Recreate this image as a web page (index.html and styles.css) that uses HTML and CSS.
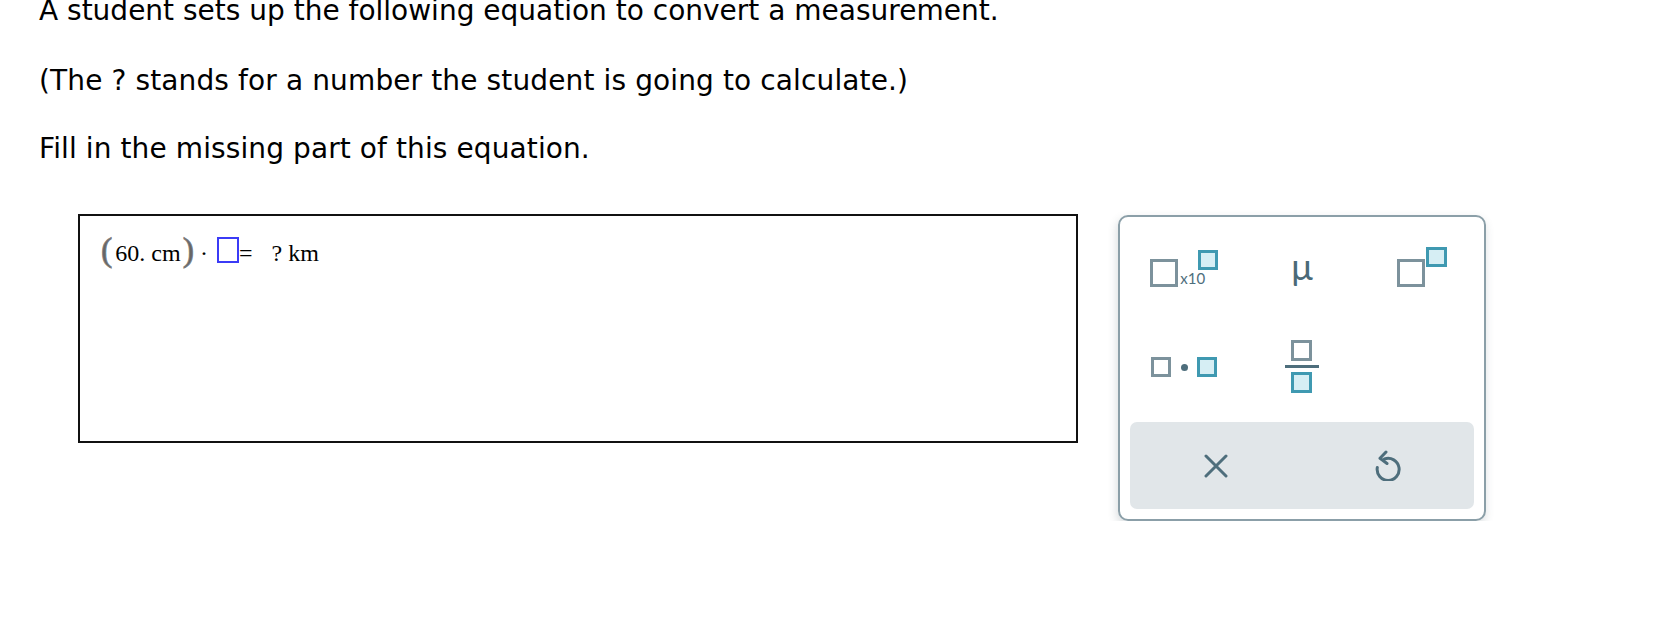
FILE: index.html
```html
<!DOCTYPE html>
<html>
<head>
<meta charset="utf-8">
<link rel="stylesheet" href="styles.css">
</head>
<body>
<div class="page">
  <p class="q q1">A student sets up the following equation to convert a measurement.</p>
  <p class="q q2">(The ? stands for a number the student is going to calculate.)</p>
  <p class="q q3">Fill in the missing part of this equation.</p>
  <div class="work">
    <div class="eqbox">
      <div class="eq"><span class="paren lp">(</span><span class="num">60.</span> <span class="unit">cm</span><span class="paren rp">)</span><span class="cdot">·</span><span class="slot"></span><span class="eqs">=</span><span class="qm">?</span> <span class="unit">km</span></div>
    </div>
    <div class="panel">
      <div class="grid">
        <div class="cell">
          <div class="ic-sci">
            <span class="bx gray big"></span>
            <span class="sci-col"><span class="bx teal sup"></span><span class="x10">x10</span></span>
          </div>
        </div>
        <div class="cell"><span class="mu">μ</span></div>
        <div class="cell">
          <div class="ic-pow">
            <span class="bx gray big"></span>
            <span class="bx teal sup2"></span>
          </div>
        </div>
        <div class="cell">
          <div class="ic-mul">
            <span class="bx gray sm"></span>
            <span class="bullet"></span>
            <span class="bx teal sm"></span>
          </div>
        </div>
        <div class="cell">
          <div class="ic-frac">
            <span class="bx gray fr"></span>
            <span class="fline"></span>
            <span class="bx teal fr"></span>
          </div>
        </div>
        <div class="cell"></div>
      </div>
      <div class="bar">
        <div class="btn">
          <svg width="24" height="24" viewBox="0 0 24 24"><path d="M2 2 L22 22 M22 2 L2 22" stroke="#4e6e7c" stroke-width="3" stroke-linecap="round" fill="none"/></svg>
        </div>
        <div class="btn">
          <svg width="26" height="31" viewBox="0 0 26 31"><path d="M2.3 17.5 A11 11 0 1 0 9.5 9" stroke="#4e6e7c" stroke-width="3" stroke-linecap="round" fill="none"/><path d="M11 2 L5 8.3 L12 13.5" stroke="#4e6e7c" stroke-width="3" stroke-linecap="round" stroke-linejoin="round" fill="none"/></svg>
        </div>
      </div>
    </div>
  </div>
</div>
</body>
</html>
```
FILE: styles.css
```css
html, body { margin: 0; padding: 0; background: #fff; }
body { font-family: "DejaVu Sans", Verdana, sans-serif; color: #000; }
.page { padding-left: 39px; margin-top: -5px; }
.q { margin: 0; font-size: 28px; line-height: 32px; }
.q1 { margin-bottom: 38px; }
.q2 { margin-bottom: 36px; letter-spacing: 0.12px; }
.q3 { margin-bottom: 49px; letter-spacing: 0.1px; }
.work { display: flex; align-items: flex-start; margin-left: 39px; }
.eqbox { box-sizing: border-box; width: 1000px; height: 229px; border: 2px solid #111; }
.eq { font-family: "Liberation Serif", "Times New Roman", serif; font-size: 24px; line-height: 40px; padding: 14px 0 0 21px; white-space: nowrap; }
.paren { font-size: 34px; color: #666; -webkit-text-stroke: 0.8px #7a7a7a; }
.lp { margin-right: 3px; }
.rp { margin-left: 2px; }
.cdot { margin: 0 9px 0 6px; }
.slot { display: inline-block; box-sizing: border-box; width: 22px; height: 26px; border: 2px solid #3b3bf6; vertical-align: -2px; }
.eqs { margin-right: 19px; }
.panel { box-sizing: border-box; width: 368px; height: 306px; margin-left: 40px; margin-top: 1px; border: 2px solid #8b9fa8; border-radius: 10px; padding: 0 10px 10px; box-shadow: -1px 4px 10px rgba(60, 80, 90, 0.2); display: flex; flex-direction: column; }
.grid { display: grid; grid-template-columns: repeat(3, 1fr); grid-template-rows: 100px 100px; }
.cell { display: flex; align-items: center; justify-content: center; }
.bx { display: block; box-sizing: border-box; border: 3px solid #7c929c; background: #fff; }
.bx.teal { border-color: #3f99b1; background: #d6eef4; }
.big { width: 28px; height: 28px; }
.ic-sci { display: flex; align-items: flex-end; margin-right: 6px; height: 39px; }
.sci-col { display: flex; flex-direction: column; align-items: flex-start; margin-left: 2px; }
.sup { width: 20px; height: 20px; margin-left: 18px; }
.x10 { font-family: "Lato", "Liberation Sans", sans-serif; font-size: 15px; line-height: 14px; margin-top: 1px; margin-bottom: 2px; color: #4e6e7c; }
.mu { font-family: "Lato", "Liberation Sans", sans-serif; font-size: 36px; line-height: 36px; color: #4a6a78; margin-top: -3px; }
.ic-pow { display: flex; align-items: flex-start; margin-left: 10px; }
.ic-pow .big { margin-top: 12px; }
.sup2 { width: 21px; height: 20px; margin-left: 1px; }
.ic-mul { display: flex; align-items: center; margin-right: 6px; }
.sm { width: 20px; height: 20px; }
.bullet { width: 7px; height: 7px; border-radius: 50%; background: #4e6e7c; margin: 0 9.5px; }
.ic-frac { display: flex; flex-direction: column; align-items: center; gap: 4px; margin-top: -2px; }
.fr { width: 21px; height: 21px; }
.fline { width: 34px; height: 3px; background: #4e6e7c; }
.bar { margin-top: 5px; height: 87px; background: #e1e6e9; border-radius: 7px; display: flex; }
.btn { flex: 1; display: flex; align-items: center; justify-content: center; }
.btn svg { display: block; }
```
